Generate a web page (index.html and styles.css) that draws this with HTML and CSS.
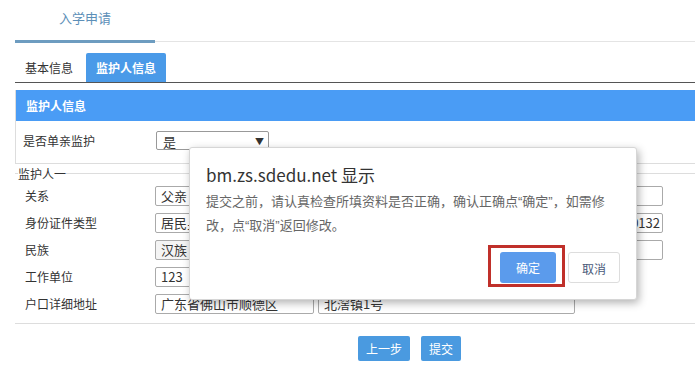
FILE: index.html
```html
<!DOCTYPE html>
<html lang="zh-CN">
<head>
  <meta charset="UTF-8" />
  <title>入学申请</title>
  <link rel="stylesheet" href="styles.css">
</head>
<body>
  <div class="page">
    <div class="head">
      <span class="head-title">入学申请</span>
    </div>

    <div class="tabs">
      <span class="tab">基本信息</span>
      <span class="tab active">监护人信息</span>
    </div>

    <div class="panel">
      <div class="panel-title">监护人信息</div>
      <div class="panel-body">
        <div class="row">
          <label>是否单亲监护</label>
          <div class="select">是<span class="arrow">▼</span></div>
        </div>
      </div>
    </div>

    <fieldset class="guardian">
      <legend>监护人一</legend>
      <div class="row">
        <label>关系</label>
        <div class="box w-full">父亲</div>
      </div>
      <div class="row">
        <label>身份证件类型</label>
        <div class="box w-half">居民身份证</div>
        <div class="box w-rest right">440681198001010132</div>
      </div>
      <div class="row">
        <label>民族</label>
        <div class="box w-half gray">汉族</div>
        <div class="box w-rest"></div>
      </div>
      <div class="row">
        <label>工作单位</label>
        <div class="box w-work">123</div>
      </div>
      <div class="row">
        <label>户口详细地址</label>
        <div class="box w-city">广东省佛山市顺德区</div>
        <div class="box w-street">北滘镇1号</div>
      </div>
    </fieldset>

    <div class="actions">
      <span class="btn">上一步</span>
      <span class="btn">提交</span>
    </div>
  </div>

  <div class="dialog">
    <div class="dialog-title">bm.zs.sdedu.net 显示</div>
    <div class="dialog-text">提交之前，请认真检查所填资料是否正确，确认正确点“确定”，如需修改，点“取消”返回修改。</div>
    <div class="dialog-buttons">
      <span class="mark"><span class="ok">确定</span></span>
      <span class="cancel">取消</span>
    </div>
  </div>
</body>
</html>
```

FILE: styles.css
```css
body {
  margin: 0;
  font-family: "Noto Sans CJK SC", "Liberation Sans", sans-serif;
  font-size: 12px;
  color: #333;
  background: #fff;
  overflow: hidden;
}
.page {
  padding-left: 15px;
  width: 700px;
}
.head {
  height: 41px;
  border-bottom: 1px solid #e4e4e4;
}
.head-title {
  display: block;
  width: 140px;
  height: 43px;
  line-height: 36px;
  text-align: center;
  font-size: 13px;
  color: #5c8fb8;
  border-bottom: 3px solid #6d9cc0;
  box-sizing: border-box;
}
.tabs {
  display: flex;
  align-items: flex-end;
  height: 40px;
  border-bottom: 1px solid #555;
}
.tab {
  padding: 0 10px;
  height: 29px;
  line-height: 29px;
  font-size: 12px;
  color: #333;
}
.tab.active {
  margin-left: 3px;
  background: #4a9ae8;
  color: #fff;
  font-weight: bold;
  border-radius: 2px 2px 0 0;
}
.panel {
  margin-top: 7px;
  border: 1px solid #ddd;
  border-top: none;
}
.panel-title {
  height: 31px;
  line-height: 31px;
  padding-left: 10px;
  background: #4a9cf5;
  color: #fff;
  font-weight: bold;
  font-size: 12px;
}
.panel-body {
  padding: 6px 0 9px 0;
}
.row {
  display: flex;
  align-items: center;
  height: 27px;
}
.row label {
  width: 140px;
  padding-left: 7px;
  box-sizing: border-box;
  font-size: 12px;
  color: #333;
}
.select {
  width: 113px;
  height: 19px;
  line-height: 19px;
  border: 1px solid #999;
  box-sizing: border-box;
  padding-left: 6px;
  font-size: 13px;
  position: relative;
  border-radius: 2px;
}
.arrow {
  position: absolute;
  right: 4px;
  top: 0;
  font-size: 9px;
}
.guardian {
  margin: 1px 0 0 0;
  padding: 0 0 6px 0;
  border: none;
  border-top: 1px solid #ddd;
  border-bottom: 1px solid #ddd;
}
.guardian legend {
  padding: 0;
  margin-left: 3px;
  font-size: 12px;
  line-height: 17px;
  color: #333;
}
.guardian .row label {
  padding-left: 10px;
}
.box {
  height: 20px;
  line-height: 18px;
  border: 1px solid #aaa;
  box-sizing: border-box;
  padding-left: 5px;
  font-size: 13px;
  border-radius: 2px;
  white-space: nowrap;
  overflow: hidden;
}
.box.gray {
  background: #f4f4f4;
}
.box.right {
  text-align: right;
  padding-right: 2px;
}
.w-full { width: 508px; }
.w-half { width: 200px; }
.w-rest { width: 304px; margin-left: 4px; }
.w-work { width: 300px; }
.w-city { width: 159px; }
.w-street { width: 257px; margin-left: 4px; }
.actions {
  display: flex;
  gap: 11px;
  padding: 12px 0 0 343px;
}
.btn {
  height: 25px;
  line-height: 25px;
  padding: 0 8px;
  background: #4a9ae0;
  color: #fff;
  font-size: 12px;
  border-radius: 2px;
}
.dialog {
  position: absolute;
  left: 189px;
  top: 147px;
  width: 448px;
  height: 153px;
  box-sizing: border-box;
  background: #fff;
  border: 1px solid #d6d6d6;
  border-radius: 3px;
  box-shadow: 2px 3px 8px rgba(0, 0, 0, 0.3);
  padding: 16px 16px 0 16px;
}
.dialog-title {
  font-size: 17px;
  color: #333;
  line-height: 22px;
}
.dialog-text {
  margin-top: 4px;
  font-family: "Liberation Sans", "Noto Sans CJK SC", sans-serif;
  font-size: 13px;
  line-height: 24px;
  color: #666;
  padding-right: 12px;
}
.dialog-buttons {
  display: flex;
  justify-content: flex-end;
  align-items: flex-start;
  margin-top: 7px;
}
.mark {
  border: 3px solid #c0302a;
  padding: 4px 6px 1px 9px;
}
.ok {
  display: block;
  width: 56px;
  height: 31px;
  line-height: 31px;
  text-align: center;
  background: #5b9bec;
  color: #fff;
  font-size: 12px;
  border-radius: 3px;
}
.cancel {
  width: 52px;
  height: 31px;
  line-height: 31px;
  margin-top: 7px;
  margin-left: 3px;
  text-align: center;
  border: 1px solid #ddd;
  border-radius: 3px;
  box-sizing: border-box;
  color: #4a5a7a;
  font-size: 12px;
}
```
